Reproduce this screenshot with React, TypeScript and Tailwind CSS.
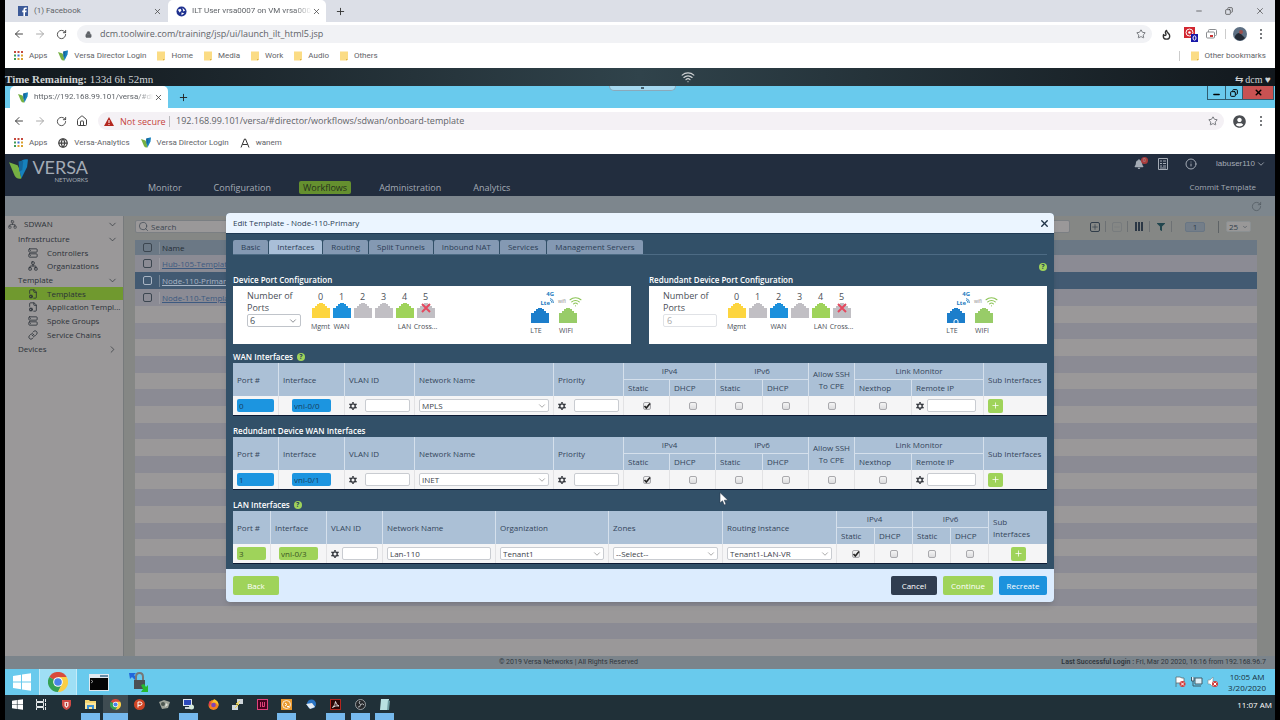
import { useState } from "react";
import type { ReactNode } from "react";
import {
  ArrowLeft,
  ArrowRight,
  ChevronDown,
  ChevronRight,
  Copy,
  FileCog,
  Flame,
  Globe,
  House,
  Info,
  Link,
  Lock,
  Minus,
  Network,
  Plus,
  RotateCw,
  Search,
  Server,
  Star,
  Wifi,
  X,
} from "lucide-react";
import { FaBell, FaFilter, FaUserCircle } from "react-icons/fa";

const cell = "border-r border-[#d5e0ec] px-1 font-normal";
const body = "border-r border-[#e2e2e4] px-1";
const field =
  "h-[13px] min-w-0 rounded-[2px] border border-[#c9ccd1] bg-white px-[2px] text-[8px] leading-[11px] text-[#3c4149] outline-none";

const VersaMark = ({ className }: { className: string }) => (
  <svg viewBox="0 0 20 22" className={className}>
    <path d="M0 4L9 7L11 11L13 21Q8 22 6 18Z" fill="#76b043" />
    <path d="M11 5Q14 0 20 1L19 9L13 21L11 12Z" fill="#1681bd" />
    <path d="M10 3L15 2L14 12L11 14Z" fill="#15669c" />
  </svg>
);

const AppsGrid = () => (
  <svg viewBox="0 0 9 9" className="h-[9px] w-[9px]">
    {["#c5483c", "#c5483c", "#c5483c", "#3f9a57", "#3b6fd0", "#d9a02e", "#3f9a57", "#d9a02e", "#d9a02e"].map((c, i) => (
      <rect key={i} x={(i % 3) * 3.5} y={Math.floor(i / 3) * 3.5} width="2" height="2" fill={c} />
    ))}
  </svg>
);

const Folder = () => (
  <svg viewBox="0 0 8 10" className="h-[10px] w-2">
    <path d="M0 .5H8V8.5L7 9.5H0Z" fill="#fbdc84" />
    <path d="M6 9.5V8H8" fill="#d9ad45" />
  </svg>
);

const Dots = () => (
  <svg viewBox="0 0 4 12" className="h-3 w-1" fill="#4b4e52">
    <circle cx="2" cy="2" r="1" />
    <circle cx="2" cy="6" r="1" />
    <circle cx="2" cy="10" r="1" />
  </svg>
);

const Bookmark = ({ icon, children }: { icon: ReactNode; children: ReactNode }) => (
  <a href="#" className="flex items-center gap-[6px] whitespace-nowrap">
    {icon}
    {children}
  </a>
);

const HostBrowser = () => (
  <div className="bg-white font-['Roboto','Open_Sans',sans-serif] text-[8px] text-[#5f6368]">
    <div className="flex h-[22px] items-stretch bg-[#dcdfe7]">
      <div className="flex w-[163px] items-center pr-[6px] pl-[13px]">
        <svg viewBox="0 0 10 10" className="mr-[6px] h-[10px] w-[10px]">
          <rect width="10" height="10" fill="#3c5a98" />
          <path d="M7 10V6.2H8.4L8.6 4.6H7V3.8Q7 3 7.9 3H8.7V1.6H7.4Q5.4 1.6 5.4 3.6V4.6H4.2V6.2H5.4V10Z" fill="#fff" />
        </svg>
        <span className="flex-1">(1) Facebook</span>
        <X size={9} color="#444" />
      </div>
      <div className="flex w-[158px] items-center rounded-t-[5px] bg-white pr-[5px] pl-2">
        <svg viewBox="0 0 12 12" className="mr-[5px] h-[11px] w-[11px] shrink-0">
          <circle cx="6" cy="6" r="5.500" fill="#1f318f" />
          <path d="M2 4L5 3 6 5 4 7ZM7 2L10 5 8 6ZM6 7L9 8 6 10Z" fill="#fff" />
        </svg>
        <span className="flex-1 whitespace-nowrap mask-r-from-85%">ILT User vrsa0007 on VM vrsa000</span>
        <X size={9} color="#444" className="shrink-0" />
      </div>
      <button aria-label="New tab" className="ml-[9px]">
        <Plus size={11} color="#333" />
      </button>
      <div className="mr-[10px] ml-auto flex items-center gap-[22px] text-[#333]">
        <button aria-label="Minimize"><Minus size={8} strokeWidth={2} /></button>
        <button aria-label="Restore"><Copy size={8} className="-scale-x-100" /></button>
        <button aria-label="Close"><X size={10} strokeWidth={1.5} /></button>
      </div>
    </div>
    <div className="flex h-6 items-center pr-3 pl-2 font-['Open_Sans',sans-serif]">
      <ArrowLeft size={12} color="#444" />
      <ArrowRight size={12} color="#aaa" className="ml-[9px]" />
      <RotateCw size={11} color="#444" className="ml-[10px]" />
      <div className="ml-[10px] flex h-[18px] flex-1 items-center rounded-full bg-[#f1f2f5] pr-[6px] pl-2">
        <Lock size={7} fill="#5f6368" />
        <input aria-label="Address" className="ml-2 flex-1 text-[9px] outline-none" defaultValue="dcm.toolwire.com/training/jsp/ui/launch_ilt_html5.jsp" />
        <Star size={10} />
      </div>
      <Flame size={11} strokeWidth={3} color="#333" className="ml-[9px]" />
      <svg viewBox="0 0 14 15" className="ml-3 h-[15px] w-[14px]">
        <rect width="11" height="11" fill="#d22630" />
        <circle cx="5.500" cy="5.500" r="3.500" fill="none" stroke="#fff" />
        <circle cx="5.500" cy="5.500" r="1.300" fill="#fff" />
        <rect x="7" y="7" width="7" height="8" fill="#1616a8" />
        <ellipse cx="10.500" cy="11" rx="1.500" ry="2.200" fill="none" stroke="#fff" />
      </svg>
      <svg viewBox="0 0 11 10" className="ml-2 h-[10px] w-[11px]" fill="#fff" stroke="#8a8d90">
        <rect x="2.500" y=".5" width="8" height="6" rx="1" />
        <rect x=".5" y="3" width="8" height="6" rx="1" />
        <path d="M4 6H7V8H4Z" fill="#c33" stroke="none" />
      </svg>
      <div className="mr-[7px] ml-2 h-[10px] w-px bg-[#ccc]" />
      <svg viewBox="0 0 14 14" className="mr-3 h-[14px] w-[14px]">
        <circle cx="7" cy="7" r="7" fill="#5d6f83" />
        <path d="M2 9Q5 4 8 7L12 11Q7 16 2 11Z" fill="#232a35" />
        <circle cx="8" cy="5" r="2" fill="#9c4f4c" />
      </svg>
      <Dots />
    </div>
    <div className="flex h-[22px] items-center gap-[11px] pr-[9px] pb-[3px] pl-[9px]">
      <Bookmark icon={<AppsGrid />}>Apps</Bookmark>
      <Bookmark icon={<VersaMark className="h-[11px] w-[10px]" />}>Versa Director Login</Bookmark>
      {["Home", "Media", "Work", "Audio", "Others"].map((name) => (
        <Bookmark key={name} icon={<Folder />}>{name}</Bookmark>
      ))}
      <div className="ml-auto h-[10px] w-px bg-[#ccc]" />
      <Bookmark icon={<Folder />}>Other bookmarks</Bookmark>
    </div>
  </div>
);

const SessionBar = () => (
  <div className="relative flex h-[18px] items-end justify-between bg-linear-to-r from-[#12181d] via-[#30434b] to-[#12181d] pr-1 font-['Liberation_Serif',serif] text-[11px] leading-[13px] text-[#d0d3d5]">
    <span><b>Time Remaining:</b> 133d 6h 52mn</span>
    <span className="text-[10px]">⇆ dcm ♥</span>
    <Wifi size={14} className="absolute top-[2px] left-[676px]" />
  </div>
);

const RemoteBrowser = () => (
  <div className="bg-white font-['Roboto','Open_Sans',sans-serif] text-[8px] text-[#5f6368]">
    <div className="relative flex h-[22px] bg-[#69caed]">
      <div className="ml-[5px] flex w-[158px] items-center rounded-t-[5px] bg-white pr-[5px] pl-2">
        <VersaMark className="mr-[6px] h-[11px] w-[10px] shrink-0" />
        <span className="flex-1 whitespace-nowrap mask-r-from-85%">https://192.168.99.101/versa/#di</span>
        <X size={9} color="#333" className="shrink-0" />
      </div>
      <button aria-label="New tab" className="ml-[10px]">
        <Plus size={11} color="#222" />
      </button>
      <div className="absolute top-0 left-[604px] flex h-[5px] w-[67px] justify-center rounded-b-[5px] border border-t-0 border-[#8aa9bb] bg-[#a5d8ef]">
        <div className="mt-px h-[2px] w-[3px] bg-[#46606e]" />
      </div>
      <div className="mr-[1px] ml-auto flex h-[14px] border border-t-0 border-[#2f5d70] text-black">
        <button aria-label="Minimize" className="flex w-[18px] items-end justify-center border-r border-[#2f5d70]"><Minus size={9} strokeWidth={4} /></button>
        <button aria-label="Restore" className="flex w-[17px] items-center justify-center border-r border-[#2f5d70]"><Copy size={8} strokeWidth={3} className="-scale-x-100" /></button>
        <button aria-label="Close" className="flex w-[30px] items-center justify-center bg-[#c85252]"><X size={9} strokeWidth={4} /></button>
      </div>
    </div>
    <div className="flex h-[26px] items-center pr-3 pl-2 font-['Open_Sans',sans-serif]">
      <ArrowLeft size={12} color="#444" />
      <ArrowRight size={12} color="#aaa" className="ml-[9px]" />
      <RotateCw size={11} color="#444" className="ml-[10px]" />
      <House size={12} color="#444" className="ml-[9px]" />
      <div className="ml-[10px] flex h-[18px] flex-1 items-center rounded-full bg-[#f4f1f5] pr-[6px] pl-[6px]">
        <svg viewBox="0 0 10 9" className="h-[9px] w-[10px]">
          <path d="M5 0L10 9H0Z" fill="#b3261e" />
          <path d="M5 3V6M5 7V8" stroke="#fff" />
        </svg>
        <span className="ml-[6px] w-[50px] border-r border-[#b9b9bd] text-[9px] leading-[11px] whitespace-nowrap text-[#c5423c]">Not secure</span>
        <input aria-label="Address" className="ml-[6px] flex-1 text-[9px] outline-none" defaultValue="192.168.99.101/versa/#director/workflows/sdwan/onboard-template" />
        <Star size={10} />
      </div>
      <FaUserCircle size={13} color="#4b4e52" className="mr-[13px] ml-[9px]" />
      <Dots />
    </div>
    <div className="flex h-5 items-center gap-[11px] pb-[3px] pl-[9px]">
      <Bookmark icon={<AppsGrid />}>Apps</Bookmark>
      <Bookmark icon={<Globe size={10} strokeWidth={3} color="#444" />}>Versa-Analytics</Bookmark>
      <Bookmark icon={<VersaMark className="h-[11px] w-[10px]" />}>Versa Director Login</Bookmark>
      <Bookmark
        icon={
          <svg viewBox="0 0 10 10" className="h-[10px] w-[10px]" fill="none" stroke="#333">
            <path d="M1 9.500L4.500 1H5.500L9 9.500M2.500 6.500H7.500" />
          </svg>
        }
      >
        wanem
      </Bookmark>
    </div>
  </div>
);

const navItems = ["Monitor", "Configuration", "Workflows", "Administration", "Analytics"];

const AppHeader = () => (
  <header className="flex h-[42px] bg-[#222d3e] text-[#a4abb5]">
    <div className="flex w-[139px] pt-1 pl-1">
      <VersaMark className="h-[22px] w-[19px]" />
      <div className="ml-[6px] flex w-[54px] flex-col items-end font-['Lato',sans-serif]">
        <span className="text-[18px] leading-[19px]">VERSA</span>
        <span className="text-[6px] leading-[5px]">NETWORKS</span>
      </div>
    </div>
    <nav className="flex items-end gap-6 pb-[2px] text-[9px] leading-[13px]">
      {navItems.map((item) => (
        <a
          key={item}
          href="#"
          className={item === "Workflows" ? "rounded-[2px] bg-[#65902f] px-1 text-[#26331c]" : "px-1"}
        >
          {item}
        </a>
      ))}
    </nav>
    <div className="ml-auto flex flex-col items-end justify-between pt-1 pr-[9px] pb-[3px] text-[8px] leading-[12px]">
      <div className="flex items-center">
        <div className="relative mr-[14px]">
          <FaBell size={10} />
          <span className="absolute -top-[2px] left-[7px] h-[7px] w-[7px] rounded-full bg-[#a93b3b] text-center text-[5px] leading-[7px]">0</span>
        </div>
        <svg viewBox="0 0 10 12" className="mr-[17px] h-3 w-[10px]" fill="none" stroke="currentColor">
          <path d="M.5 .5H9.500V11.500H.5ZM2 3H4M5 3H8M2 5.500H4M5 5.500H8M2 8H4M5 8H8M2 10H8" />
        </svg>
        <Info size={12} className="mr-[19px]" />
        <button className="flex items-center gap-px font-['Liberation_Sans',sans-serif]">
          labuser110
          <ChevronDown size={10} />
        </button>
      </div>
      <a href="#" className="pr-[10px]">Commit Template</a>
    </div>
  </header>
);

const sideItems = [
  { label: "Controllers", icon: Server, row: "h-[13px]" },
  { label: "Organizations", icon: Network, row: "h-[14px]" },
];

const templateItems = [
  { label: "Templates", icon: FileCog, row: "h-[13px] bg-[#70992f]" },
  { label: "Application Templ...", icon: FileCog, row: "h-[14px]" },
  { label: "Spoke Groups", icon: Server, row: "h-[13px]" },
  { label: "Service Chains", icon: Link, row: "h-[15px]" },
];

const SideGroup = ({ label, open = true }: { label: string; open?: boolean }) => (
  <button className="flex h-[14px] w-full items-center justify-between pr-[5px] pl-[13px]">
    {label}
    {open ? <ChevronDown size={11} strokeWidth={1.5} /> : <ChevronRight size={11} strokeWidth={1.5} />}
  </button>
);

const SideLinks = ({ items }: { items: typeof sideItems }) => (
  <>
    {items.map(({ label, icon: Icon, row }) => (
      <a key={label} href="#" className={`flex items-center gap-[9px] pl-[23px] whitespace-nowrap ${row}`}>
        <Icon size={10} className="shrink-0" />
        {label}
      </a>
    ))}
  </>
);

const Sidebar = () => (
  <aside className="w-[119px] shrink-0 border-r border-[#777a7c] bg-[#9a9899] text-[8px] leading-[12px] text-[#2b3138]">
    <button className="flex h-4 w-full items-center pr-[5px] pl-[3px]">
      <Network size={9} className="mr-[7px]" strokeWidth={1.5} />
      SDWAN
      <ChevronDown size={11} strokeWidth={1.5} className="ml-auto" />
    </button>
    <SideGroup label="Infrastructure" />
    <SideLinks items={sideItems} />
    <SideGroup label="Template" />
    <SideLinks items={templateItems} />
    <SideGroup label="Devices" open={false} />
  </aside>
);

const templates = ["Hub-105-Template", "Node-110-Primary", "Node-110-Template"];
const rowTones = ["bg-[#8b8b94]", "bg-[#425a72] text-[#a9b5c4]", "bg-[#8b8b94]"];
const fillers = Array.from({ length: 21 }, (_, i) => i);

const Tick = ({ label }: { label: string }) => (
  <span className="flex w-6 items-center justify-center">
    <input type="checkbox" aria-label={label} className="h-[9px] w-[9px] appearance-none rounded-[2px] border border-current" />
  </span>
);

const ToolDivider = () => <div className="mr-[6px] ml-[5px] h-[11px] w-px bg-[#6d7174]" />;

const TemplateList = () => (
  <main className="flex min-w-0 flex-1 flex-col pr-[18px] pl-[11px] text-[8px] text-[#3c4650]">
    <div className="flex h-6 items-center pb-[3px]">
      <div className="flex h-[13px] flex-1 items-center rounded-[2px] border border-[#7b7f83] bg-[#9a9899] pl-[2px]">
        <Search size={11} strokeWidth={1.5} />
        <input type="search" aria-label="Search" placeholder="Search" className="ml-[2px] flex-1 outline-none placeholder:text-[#3c4650]" />
      </div>
      <div className="ml-5 flex items-center text-[#313d4a]">
        <button aria-label="Add"><Plus size={10} className="rounded-[2px] border border-[#313d4a]" /></button>
        <ToolDivider />
        <button aria-label="Remove"><Minus size={10} className="rounded-[2px] border border-[#787c7e] text-[#787c7e]" /></button>
        <ToolDivider />
        <svg viewBox="0 0 10 9" className="h-[9px] w-[10px]" fill="#2b3745">
          <path d="M1 0H3V9H1ZM4 0H6V9H4ZM7 0H9V9H7Z" />
        </svg>
        <ToolDivider />
        <FaFilter size={8} color="#21464e" className="mx-px" />
        <ToolDivider />
        <button className="ml-[7px] h-[10px] w-5 rounded-[2px] border border-[#697684] bg-[#747e89] text-[8px] leading-[8px]">1</button>
        <div className="mr-[7px] ml-[13px] h-3 w-px bg-[#5e6366]" />
        <div className="relative mr-[6px]">
          <select aria-label="Rows per page" className="block h-[11px] w-[25px] appearance-none rounded-[2px] border border-[#8b9092] bg-[#999898] pl-[2px] text-[8px] leading-[9px]">
            <option>25</option>
          </select>
          <ChevronDown size={6} className="pointer-events-none absolute top-[3px] right-[3px]" />
        </div>
      </div>
    </div>
    <div className="flex h-[15px] shrink-0 items-center bg-[#6b7885]">
      <Tick label="Select all" />
      <span className="border-l border-[#808a94] pl-[2px] text-[#252d36]">Name</span>
    </div>
    {templates.map((name, i) => (
      <div key={name} className={`flex h-[17px] shrink-0 items-center ${rowTones[i]}`}>
        <Tick label={name} />
        <a href="#" className={i === 1 ? "border-l border-[#708192] pl-[2px] underline" : "border-l border-[#9b9ba2] pl-[2px] text-[#3d5a80] underline"}>
          {name}
        </a>
      </div>
    ))}
    <div className="flex flex-1 flex-col">
      {fillers.map((i) => (
        <div key={i} className="flex-1 odd:bg-[#9a9899] even:bg-[#8b8b94]" />
      ))}
    </div>
  </main>
);

const HelpDot = () => (
  <span className="flex h-2 w-2 items-center justify-center rounded-full bg-[#9fd35a] text-[7px] leading-[8px] font-bold text-[#27425a]">?</span>
);

const Jack = ({ color, children }: { color: string; children?: ReactNode }) => (
  <svg viewBox="0 0 18 15" className="h-[15px] w-[18px]">
    <path d="M0 15V5H3V3H5V1H7V0H11V1H13V3H15V5H18V15Z" fill={color} />
    {children}
  </svg>
);

const portColors: Record<string, string> = { Mgmt: "#fdd53f", WAN: "#1c90dc", LAN: "#9fd35a" };

const PortPanel = ({ title, ports, disabled }: { title: string; ports: string[]; disabled?: boolean }) => (
  <section className="min-w-0 flex-1">
    <h3 className="h-3 text-[8px] leading-[12px] font-semibold text-white">{title}</h3>
    <div className="flex h-[58px] bg-white pl-[14px] text-[9px] leading-[12px] text-[#4a4f57]">
      <label className="relative mt-1 w-[54px] shrink-0">
        Number of Ports
        {disabled ? (
          <input disabled value="6" readOnly className="block h-[13px] w-full rounded-[2px] border border-[#e0e2e6] px-[3px] text-[9px] text-[#aaa]" />
        ) : (
          <>
            <select className="block h-[13px] w-full appearance-none rounded-[2px] border border-[#c0c4ca] px-[2px] text-[9px] leading-[11px]">
              <option>6</option>
            </select>
            <ChevronDown size={10} strokeWidth={1.5} className="pointer-events-none absolute top-[26px] right-[3px]" />
          </>
        )}
      </label>
      <div className="mt-[5px] ml-[9px] flex">
        {ports.map((kind, i) => (
          <div key={i} className="flex w-[21px] flex-col items-center">
            <span>{i}</span>
            <Jack color={portColors[kind] ?? "#c1bfc4"}>
              {kind === "Cross..." && <path d="M5 1L13 9M13 1L5 9" stroke="#e5495f" strokeWidth="2" />}
            </Jack>
            <span className="mt-1 text-[7px] leading-[10px]">{kind}</span>
          </div>
        ))}
      </div>
      <div className="mt-1 mr-[49px] ml-auto flex">
        <div className="flex w-7 flex-col items-center text-[7px]">
          <b className="self-end text-[6px] leading-[8px] text-[#1c79be]">4G</b>
          <span className="flex h-[10px] self-end text-[6px] leading-[10px] font-bold text-[#1c79be]">
            Lte
            <svg viewBox="0 0 4 6" className="h-[6px] w-1" fill="none" stroke="currentColor" strokeWidth=".8">
              <path d="M0 2Q2 2.500 2 5M0 .5Q3.500 1 3.500 5" />
            </svg>
          </span>
          <Jack color="#1c7ecb">
            {disabled && <path d="M7 15V13Q7 11.500 9 11.500T11 13V15" fill="none" stroke="#fff" />}
          </Jack>
          <span className="mt-[3px] -ml-2 leading-[10px]">LTE</span>
        </div>
        <div className="flex w-7 flex-col items-center text-[7px]">
          <div className="flex h-[18px] items-center gap-[3px] self-end pt-1 text-[5px] text-[#888]">
            wifi
            <Wifi size={13} color="#8bc455" />
          </div>
          <Jack color="#98cc68" />
          <span className="mt-[3px] -ml-1 leading-[10px]">WIFI</span>
        </div>
      </div>
    </div>
  </section>
);

const Check = ({ label, on = false }: { label: string; on?: boolean }) => (
  <span className="relative mx-auto block h-2 w-2">
    <input
      type="checkbox"
      aria-label={label}
      defaultChecked={on}
      className="peer block h-2 w-2 appearance-none rounded-[2px] border border-[#a9a9ad] bg-linear-to-b from-[#f4f4f4] to-[#dcdcde]"
    />
    <svg viewBox="0 0 8 8" className="pointer-events-none absolute top-0 left-0 hidden h-2 w-2 peer-checked:block" fill="none" stroke="#222" strokeWidth="1.600">
      <path d="M1.500 4L3.300 6L7 1.500" />
    </svg>
  </span>
);

const Dropdown = ({ label, value }: { label: string; value: string }) => (
  <span className="relative block">
    <select aria-label={label} className={`${field} block w-full appearance-none`}>
      <option>{value}</option>
    </select>
    <ChevronDown size={10} strokeWidth={1.5} color="#777" className="pointer-events-none absolute top-[2px] right-[2px]" />
  </span>
);

const Gear = () => (
  <svg viewBox="0 0 8 8" className="h-2 w-2 shrink-0" fill="none" stroke="#2f3238">
    <circle cx="4" cy="4" r="2.200" strokeWidth="1.300" />
    <path d="M4 0V1.500M4 6.500V8M.5 2L1.800 2.800M6.200 5.200L7.500 6M.5 6L1.800 5.200M6.200 2.800L7.500 2" strokeWidth="1.500" />
  </svg>
);

const WithGear = ({ label, width, gap = "gap-2" }: { label: string; width: string; gap?: string }) => (
  <span className={`flex items-center ${gap}`}>
    <Gear />
    <input aria-label={label} className={`${field} ${width}`} />
  </span>
);

const AddButton = () => (
  <button aria-label="Add sub interface" className="flex h-[14px] w-[15px] items-center justify-center rounded-[2px] bg-[#9fd35a] text-white">
    <Plus size={9} />
  </button>
);

const headRow = "bg-[#abc0d6] text-left text-[#34455a]";
const tableClass = "w-full table-fixed border-separate border-spacing-0 border-b border-[#0c1a33] bg-[#f5f5f6] text-[8px] leading-[12px]";
const wanCols = ["w-[46px]", "w-[66px]", "w-[70px]", "w-[139px]", "w-[70px]", "w-[46px]", "w-[46px]", "w-[47px]", "w-[46px]", "w-[46px]", "w-[57px]", "w-[72px]", "w-[63px]"];
const lanCols = ["w-[38px]", "w-[56px]", "w-[56px]", "w-[113px]", "w-[113px]", "w-[114px]", "w-[114px]", "w-[38px]", "w-[38px]", "w-[38px]", "w-[38px]", "w-[58px]"];

const SectionTitle = ({ children, help }: { children: ReactNode; help?: boolean }) => (
  <h3 className="flex h-3 items-center gap-1 text-[8px] leading-[12px] font-semibold text-white">
    {children}
    {help && <HelpDot />}
  </h3>
);

const WanTable = ({ port, name, network }: { port: string; name: string; network: string }) => (
  <table className={tableClass}>
    <colgroup>{wanCols.map((w, i) => <col key={i} className={w} />)}</colgroup>
    <thead>
      <tr className={`${headRow} h-[17px]`}>
        <th rowSpan={2} className={cell}>Port #</th>
        <th rowSpan={2} className={cell}>Interface</th>
        <th rowSpan={2} className={cell}>VLAN ID</th>
        <th rowSpan={2} className={cell}>Network Name</th>
        <th rowSpan={2} className={cell}>Priority</th>
        <th colSpan={2} className={`${cell} border-b text-center`}>IPv4</th>
        <th colSpan={2} className={`${cell} border-b text-center`}>IPv6</th>
        <th rowSpan={2} className={`${cell} text-center`}>Allow SSH<br />To CPE</th>
        <th colSpan={2} className={`${cell} border-b text-center`}>Link Monitor</th>
        <th rowSpan={2} className="px-1 font-normal whitespace-nowrap">Sub Interfaces</th>
      </tr>
      <tr className={`${headRow} h-4`}>
        {["Static", "DHCP", "Static", "DHCP", "Nexthop", "Remote IP"].map((h, i) => (
          <th key={i} className={cell}>{h}</th>
        ))}
      </tr>
    </thead>
    <tbody>
      <tr className="h-[19px]">
        <td className={body}><input aria-label="Port" defaultValue={port} className="block h-[13px] w-full rounded-[2px] bg-[#1c95e0] px-[2px] text-[#17405f]" /></td>
        <td className={body}><input aria-label="Interface" defaultValue={name} className="mx-auto block h-[13px] w-[39px] rounded-[2px] bg-[#1c95e0] px-[2px] text-[#17405f]" /></td>
        <td className={body}><WithGear label="VLAN ID" width="flex-1" /></td>
        <td className={body}><Dropdown label="Network name" value={network} /></td>
        <td className={body}><WithGear label="Priority" width="flex-1" /></td>
        <td className={body}><Check label="IPv4 static" on /></td>
        <td className={body}><Check label="IPv4 DHCP" /></td>
        <td className={body}><Check label="IPv6 static" /></td>
        <td className={body}><Check label="IPv6 DHCP" /></td>
        <td className={body}><Check label="Allow SSH to CPE" /></td>
        <td className={body}><Check label="Nexthop" /></td>
        <td className={body}><WithGear label="Remote IP" width="w-[49px]" gap="gap-[3px]" /></td>
        <td className="px-1"><AddButton /></td>
      </tr>
    </tbody>
  </table>
);

const LanTable = () => (
  <table className={tableClass}>
    <colgroup>{lanCols.map((w, i) => <col key={i} className={w} />)}</colgroup>
    <thead>
      <tr className={`${headRow} h-[17px]`}>
        {["Port #", "Interface", "VLAN ID", "Network Name", "Organization", "Zones", "Routing Instance"].map((h) => (
          <th key={h} rowSpan={2} className={cell}>{h}</th>
        ))}
        <th colSpan={2} className={`${cell} border-b text-center`}>IPv4</th>
        <th colSpan={2} className={`${cell} border-b text-center`}>IPv6</th>
        <th rowSpan={2} className="px-1 font-normal">Sub<br />Interfaces</th>
      </tr>
      <tr className={`${headRow} h-4`}>
        {["Static", "DHCP", "Static", "DHCP"].map((h, i) => (
          <th key={i} className={cell}>{h}</th>
        ))}
      </tr>
    </thead>
    <tbody>
      <tr className="h-[19px]">
        <td className={body}><input aria-label="Port" defaultValue="3" className="block h-[13px] w-full rounded-[2px] bg-[#9fd35a] px-[2px] text-[#3b5423]" /></td>
        <td className={body}><input aria-label="Interface" defaultValue="vni-0/3" className="mx-auto block h-[13px] w-[39px] rounded-[2px] bg-[#9fd35a] px-[2px] text-[#3b5423]" /></td>
        <td className={body}><WithGear label="VLAN ID" width="flex-1" gap="gap-[3px]" /></td>
        <td className={body}><input aria-label="Network name" defaultValue="Lan-110" className={`${field} block w-full`} /></td>
        <td className={body}><Dropdown label="Organization" value="Tenant1" /></td>
        <td className={body}><Dropdown label="Zones" value="--Select--" /></td>
        <td className={body}><Dropdown label="Routing instance" value="Tenant1-LAN-VR" /></td>
        <td className={body}><Check label="IPv4 static" on /></td>
        <td className={body}><Check label="IPv4 DHCP" /></td>
        <td className={body}><Check label="IPv6 static" /></td>
        <td className={body}><Check label="IPv6 DHCP" /></td>
        <td><div className="flex justify-center"><AddButton /></div></td>
      </tr>
    </tbody>
  </table>
);

const tabs = ["Basic", "Interfaces", "Routing", "Split Tunnels", "Inbound NAT", "Services", "Management Servers"];

const EditTemplate = () => {
  const [tab, setTab] = useState("Interfaces");

  return (
    <div role="dialog" aria-label="Edit Template" className="absolute top-[59px] right-[221px] left-[221px] overflow-hidden rounded-[4px] bg-[#325068] shadow-md">
      <div className="flex h-[21px] items-center justify-between border-b border-[#1f3a54] bg-[#ebf5ff] pr-1 pl-[7px] text-[8px] text-[#2c3e55]">
        <h2 className="font-medium">Edit Template - Node-110-Primary</h2>
        <button aria-label="Close"><X size={11} strokeWidth={3} color="#1f3347" /></button>
      </div>
      <div className="px-[7px] pt-[6px] pb-[5px]">
        <div className="flex h-[15px] gap-px border-b border-[#4d6b84] text-[8px] leading-[14px]">
          {tabs.map((t) => (
            <button
              key={t}
              onClick={() => setTab(t)}
              className={`rounded-t-[2px] px-2 whitespace-nowrap text-[#2c3e55] ${t === tab ? "bg-[#a9bfd8]" : "bg-[#8499b3]"}`}
            >
              {t}
            </button>
          ))}
        </div>
        <div className="flex h-[19px] items-center justify-end pt-[5px]"><HelpDot /></div>
        <div className="flex gap-[18px]">
          <PortPanel title="Device Port Configuration" ports={["Mgmt", "WAN", "", "", "LAN", "Cross..."]} />
          <PortPanel title="Redundant Device Port Configuration" ports={["Mgmt", "", "WAN", "", "LAN", "Cross..."]} disabled />
        </div>
        <div className="mt-[7px] flex flex-col gap-[9px]">
          <section>
            <SectionTitle help>WAN Interfaces</SectionTitle>
            <WanTable port="0" name="vni-0/0" network="MPLS" />
          </section>
          <section>
            <SectionTitle>Redundant Device WAN Interfaces</SectionTitle>
            <WanTable port="1" name="vni-0/1" network="INET" />
          </section>
          <section>
            <SectionTitle help>LAN Interfaces</SectionTitle>
            <LanTable />
          </section>
        </div>
      </div>
      <div className="flex h-[33px] items-center gap-[6px] bg-[#dcecfe] px-[7px] text-[8px] font-medium text-white">
        <button className="mr-auto h-[19px] w-[46px] rounded-[2px] bg-[#9fd35a]">Back</button>
        <button className="h-[19px] w-[46px] rounded-[2px] bg-[#303d50]">Cancel</button>
        <button className="h-[19px] w-[50px] rounded-[2px] bg-[#9fd35a]">Continue</button>
        <button className="h-[19px] w-[48px] rounded-[2px] bg-[#1c92dd]">Recreate</button>
      </div>
      <svg viewBox="0 0 10 14" className="absolute top-[279px] left-[493px] h-[14px] w-[10px]">
        <path d="M1 .5V11L3.500 8.800L5.200 13L7 12.200L5.300 8.200H9Z" fill="#fff" stroke="#26364a" strokeWidth=".6" />
      </svg>
    </div>
  );
};

const WindowsLogo = ({ className }: { className: string }) => (
  <svg viewBox="0 0 18 18" className={className} fill="#fff">
    <path d="M0 3L8 1.800V8.500H0ZM9 1.600L18 .3V8.500H9ZM0 9.500H8V16.200L0 15ZM9 9.500H18V17.700L9 16.400Z" />
  </svg>
);

const ChromeLogo = ({ className }: { className: string }) => (
  <svg viewBox="0 0 20 20" className={className}>
    <path d="M10 10L1.300 5A10 10 0 0 1 18.700 5Z" fill="#d84a3c" />
    <path d="M10 10L1.300 5A10 10 0 0 0 10 20L14 12Z" fill="#35a152" />
    <path d="M10 10L10 5H18.700A10 10 0 0 1 10 20L14 12Z" fill="#fbce45" />
    <circle cx="10" cy="10" r="4.800" fill="#fff" />
    <circle cx="10" cy="10" r="3.800" fill="#4a84e8" />
  </svg>
);

const RemoteTaskbar = () => (
  <div className="flex h-[26px] items-center bg-[#69caed] pr-[9px]">
    <button aria-label="Start" className="flex w-[34px] justify-center"><WindowsLogo className="h-[18px] w-[18px]" /></button>
    <button aria-label="Chrome" className="flex h-full w-[38px] items-center justify-center border-x border-[#c5ebf8] bg-[#9fdff5]"><ChromeLogo className="h-5 w-5" /></button>
    <button aria-label="Command prompt" className="flex w-[44px] justify-center">
      <svg viewBox="0 0 20 17" className="h-[17px] w-5">
        <rect width="20" height="17" fill="#dfe9f0" />
        <path d="M11 1H19V3H11Z" fill="#678ba5" />
        <rect x="1" y="4" width="18" height="12" fill="#050505" />
        <path d="M2 6L4 7.500L2 9" fill="none" stroke="#ccc" strokeWidth=".7" />
      </svg>
    </button>
    <button aria-label="Secure transfer" className="flex w-9 justify-center">
      <svg viewBox="0 0 20 20" className="h-5 w-5">
        <path d="M0 1H7L5 3L8 6L6 8L3 5L1 7Z" fill="#2167dc" />
        <path d="M7 9V5Q7 1 10.500 1T14 5V9" fill="none" stroke="#777" strokeWidth="2" />
        <rect x="5" y="8" width="11" height="9" fill="#4c4f52" />
        <path d="M12 13L15 12L17 15L19 13V20H12L14 17Z" fill="#26b931" />
      </svg>
    </button>
    <svg viewBox="0 0 44 12" className="mr-[9px] ml-auto h-3 w-[44px]">
      <path d="M1 1V11M1 1H5L7 2H9V7H1" fill="#fff" stroke="#5b6970" strokeWidth=".8" />
      <circle cx="7.500" cy="8" r="3" fill="#d13b3b" />
      <path d="M6 6.500L9 9.500M9 6.500L6 9.500" stroke="#fff" />
      <path d="M20 2H27V8H20ZM18 10H26M16.500 1V5H19V1M18 5V10" fill="#dff0f8" stroke="#3e5a68" />
      <path d="M33 4H35L38 1V11L35 8H33Z" fill="#fff" stroke="#7a8a92" strokeWidth=".6" />
      <circle cx="40" cy="8" r="3" fill="#d13b3b" />
      <path d="M38.500 6.500L41.500 9.500M41.500 6.500L38.500 9.500" stroke="#fff" />
    </svg>
    <div className="text-center text-[8px] leading-[11px] text-[#17303c]">
      <div>10:05 AM</div>
      <div>3/20/2020</div>
    </div>
  </div>
);

const glyph = "h-[11px] w-[11px]";

const hostApps: { name: string; open?: boolean; icon: ReactNode }[] = [
  { name: "Start", icon: <WindowsLogo className={glyph} /> },
  { name: "Task view", icon: <svg viewBox="0 0 11 11" className={glyph} fill="none" stroke="#e4e8ea"><path d="M.5 0V2.500H7.500V0M.5 11V8.500H7.500V11M.5 3.500H7.500V7.500H.5ZM9.500 0V3M9.500 4V7M9.500 8V11" /></svg> },
  { name: "Security", icon: <svg viewBox="0 0 11 11" className={glyph}><path d="M1 1H10V6Q9 10 5.500 11Q2 10 1 6Z" fill="#cf4a45" /><path d="M3.500 3H7.500V7L5.500 9L3.500 7Z" fill="#f4dcda" /><path d="M5 4H6V7H5Z" fill="#a33" /></svg> },
  { name: "File Explorer", open: true, icon: <svg viewBox="0 0 11 11" className={glyph}><path d="M0 1H4L5 2H11V10H0Z" fill="#f6d672" /><path d="M0 4H11V10H0Z" fill="#fbe59b" /><path d="M2 6H9V10H7V8H4V10H2Z" fill="#3f92d6" /></svg> },
  { name: "Chrome", open: true, icon: <ChromeLogo className={glyph} /> },
  { name: "PowerPoint", icon: <svg viewBox="0 0 11 11" className={glyph}><circle cx="5.500" cy="5.500" r="5.500" fill="#d04525" /><path d="M4 8.500V3H6Q8 3 8 4.700T6 6.300H4" fill="none" stroke="#fff" /></svg> },
  { name: "Utility", icon: <svg viewBox="0 0 11 11" className={glyph}><path d="M0 3L5 1L11 3L9 9L3 10Z" fill="#9ea399" /><circle cx="4" cy="5" r="2" fill="#4c5650" /><path d="M7 4L9 6L6 8Z" fill="#dfe3dc" /></svg> },
  { name: "Remote Desktop", open: true, icon: <svg viewBox="0 0 11 11" className={glyph}><rect width="9" height="7" fill="#dfe6ef" /><rect x="1" y="1" width="7" height="5" fill="#2d49bb" /><rect x="2" y="8" width="5" height="2" fill="#ccd3da" /><circle cx="8.500" cy="8" r="2.500" fill="#d6eadc" /></svg> },
  { name: "Firefox", icon: <svg viewBox="0 0 11 11" className={glyph}><circle cx="5.500" cy="6" r="5" fill="#f4801f" /><path d="M6 0Q11 2 10.500 7Q8 2 4 4Z" fill="#fdc52c" /><circle cx="5.500" cy="6" r="2.300" fill="#8245b5" /><path d="M1 2L3 4L1 8Z" fill="#e63950" /></svg> },
  { name: "PuTTY", icon: <svg viewBox="0 0 11 11" className={glyph}><rect x="5" width="6" height="5" fill="#cfd6db" /><rect y="6" width="6" height="5" fill="#cfd6db" /><path d="M8 2L4 5H7L3 9" fill="none" stroke="#f6d440" /></svg> },
  { name: "InDesign", icon: <svg viewBox="0 0 11 11" className={glyph}><rect x=".5" y=".5" width="10" height="10" fill="#47021f" stroke="#e0417b" /><path d="M3.500 3V8M5.500 3V8M5.500 7.500H7.500V3" fill="none" stroke="#e0417b" /></svg> },
  { name: "Terminal", open: true, icon: <svg viewBox="0 0 11 11" className={glyph}><rect width="11" height="11" fill="#eb9a30" /><circle cx="5.500" cy="5.500" r="4" fill="none" stroke="#fff" strokeWidth=".8" /><path d="M4 4L6 5.500L4 7M6 7.500H8" fill="none" stroke="#fff" /></svg> },
  { name: "Thunderbird", icon: <svg viewBox="0 0 11 11" className={glyph}><circle cx="5.500" cy="5" r="4.500" fill="#2873c4" /><path d="M0 5L6 4L9 8L4 10Z" fill="#e6edf4" /></svg> },
  { name: "Acrobat", open: true, icon: <svg viewBox="0 0 11 11" className={glyph}><rect x=".5" y=".5" width="10" height="10" fill="#2b0605" stroke="#b3261e" /><path d="M2.500 8.500Q5.500 6 5.500 2.500Q6 6 9 7Q6 6 2.500 8.500" fill="none" stroke="#fff" strokeWidth=".8" /></svg> },
  { name: "OBS", open: true, icon: <svg viewBox="0 0 11 11" className={glyph}><circle cx="5.500" cy="5.500" r="5" fill="#26282b" stroke="#b4b8bb" strokeWidth=".8" /><path d="M5.500 5.500Q3 4 5 2M5.500 5.500Q8 4 9 6M5.500 5.500Q5.500 8.500 3 8" fill="none" stroke="#b4b8bb" /></svg> },
  { name: "Notepad", open: true, icon: <svg viewBox="0 0 11 11" className={glyph}><path d="M2 0H10L9 11H1Z" fill="#b9e0e2" /><path d="M9 1L11 2L10 11H8Z" fill="#6f9ca3" /></svg> },
];

const HostTaskbar = () => (
  <div className="flex h-[25px] items-center justify-between bg-[#203038] pr-[3px]">
    <div className="grid h-full w-[392px] grid-cols-16">
      {hostApps.map(({ name, open, icon }) => (
        <button
          key={name}
          aria-label={name}
          className={`flex flex-col items-center justify-between pt-1 ${name === "Chrome" ? "bg-[#3f4c52]" : ""}`}
        >
          {icon}
          <span className={`h-[7px] ${name === "Chrome" ? "w-full" : "w-[19px]"} ${open ? "bg-[#76b9ed]" : ""}`} />
        </button>
      ))}
    </div>
    <span className="pb-[5px] text-[8px] font-medium text-white">11:07 AM</span>
  </div>
);

const App = () => (
  <div className="flex min-h-screen flex-col bg-black px-[5px] font-['Open_Sans','Noto_Sans',sans-serif]">
    <HostBrowser />
    <SessionBar />
    <RemoteBrowser />
    <div className="relative flex flex-1 flex-col bg-[#858785]">
      <AppHeader />
      <div className="flex h-5 items-center justify-end bg-[#7d868d] pr-[13px]">
        <RotateCw size={11} strokeWidth={1.5} color="#4f585f" />
      </div>
      <div className="flex flex-1">
        <Sidebar />
        <TemplateList />
      </div>
      <footer className="flex h-[13px] items-center bg-[#7b848b] pr-[9px] font-['Roboto','Open_Sans',sans-serif] text-[7px] text-[#30373d]">
        <span className="flex-7" />
        <span>© 2019 Versa Networks | All Rights Reserved</span>
        <span className="flex-6" />
        <span><b className="font-semibold">Last Successful Login :</b> Fri, Mar 20 2020, 16:16 from 192.168.96.7</span>
      </footer>
      <EditTemplate />
    </div>
    <RemoteTaskbar />
    <HostTaskbar />
  </div>
);

export default App;
